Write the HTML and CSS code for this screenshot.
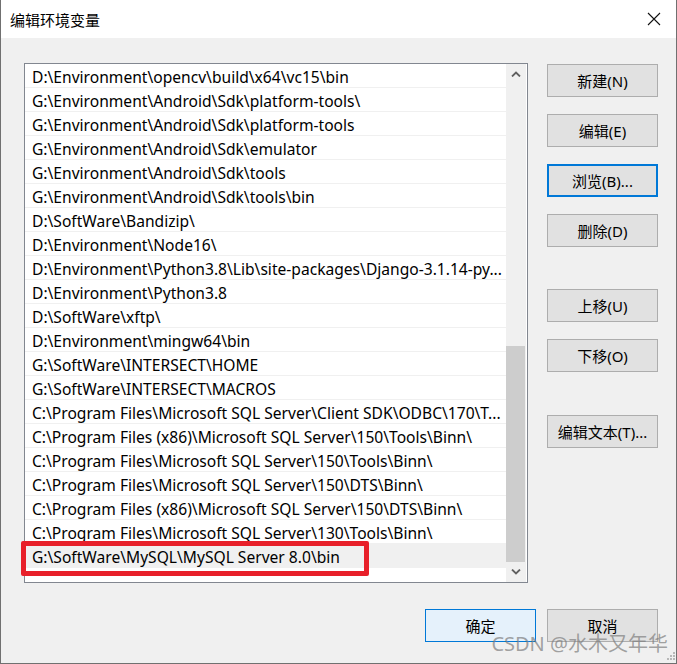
FILE: index.html
```html
<!DOCTYPE html>
<html lang="zh-CN">
<head>
<meta charset="utf-8">
<title>编辑环境变量</title>
<link rel="stylesheet" href="styles.css">
</head>
<body>
<div class="window">
  <div class="titlebar">
    <span class="title">编辑环境变量</span>
    <span class="close">
      <svg width="14" height="14" viewBox="0 0 14 14"><path d="M1 1 L13 13 M13 1 L1 13" stroke="#111" stroke-width="1.1" fill="none"/></svg>
    </span>
  </div>
  <div class="content">
    <div class="main">
      <div class="listbox">
        <div class="rows">
          <div class="row">D:\Environment\opencv\build\x64\vc15\bin</div>
          <div class="row">G:\Environment\Android\Sdk\platform-tools\</div>
          <div class="row">G:\Environment\Android\Sdk\platform-tools</div>
          <div class="row">G:\Environment\Android\Sdk\emulator</div>
          <div class="row">G:\Environment\Android\Sdk\tools</div>
          <div class="row">G:\Environment\Android\Sdk\tools\bin</div>
          <div class="row">D:\SoftWare\Bandizip\</div>
          <div class="row">D:\Environment\Node16\</div>
          <div class="row">D:\Environment\Python3.8\Lib\site-packages\Django-3.1.14-py...</div>
          <div class="row">D:\Environment\Python3.8</div>
          <div class="row">D:\SoftWare\xftp\</div>
          <div class="row">D:\Environment\mingw64\bin</div>
          <div class="row">G:\SoftWare\INTERSECT\HOME</div>
          <div class="row">G:\SoftWare\INTERSECT\MACROS</div>
          <div class="row">C:\Program Files\Microsoft SQL Server\Client SDK\ODBC\170\T...</div>
          <div class="row">C:\Program Files (x86)\Microsoft SQL Server\150\Tools\Binn\</div>
          <div class="row">C:\Program Files\Microsoft SQL Server\150\Tools\Binn\</div>
          <div class="row">C:\Program Files\Microsoft SQL Server\150\DTS\Binn\</div>
          <div class="row">C:\Program Files (x86)\Microsoft SQL Server\150\DTS\Binn\</div>
          <div class="row">C:\Program Files\Microsoft SQL Server\130\Tools\Binn\</div>
          <div class="row selected">G:\SoftWare\MySQL\MySQL Server 8.0\bin</div>
        </div>
        <div class="scrollbar">
          <div class="arrow">
            <svg width="10" height="6" viewBox="0 0 10 6"><path d="M1 5.5 L5 1.5 L9 5.5" stroke="#606060" stroke-width="1.8" fill="none"/></svg>
          </div>
          <div class="track"><div class="thumb"></div></div>
          <div class="arrow">
            <svg width="10" height="6" viewBox="0 0 10 6"><path d="M1 0.5 L5 4.5 L9 0.5" stroke="#606060" stroke-width="1.8" fill="none"/></svg>
          </div>
        </div>
        <span class="mark"></span>
      </div>
      <div class="side">
        <button class="btn">新建(N)</button>
        <button class="btn">编辑(E)</button>
        <button class="btn focus">浏览(B)...</button>
        <button class="btn">删除(D)</button>
        <button class="btn gap">上移(U)</button>
        <button class="btn">下移(O)</button>
        <button class="btn gap2">编辑文本(T)...</button>
      </div>
    </div>
    <div class="footer">
      <button class="btn default">确定</button>
      <button class="btn">取消</button>
    </div>
    <div class="watermark">CSDN @水木又年华</div>
    <svg class="grip" width="10" height="10" viewBox="0 0 10 10">
      <g fill="#b8b8b8">
        <rect x="8" y="0" width="2" height="2"/>
        <rect x="5" y="3" width="2" height="2"/><rect x="8" y="3" width="2" height="2"/>
        <rect x="2" y="6" width="2" height="2"/><rect x="5" y="6" width="2" height="2"/><rect x="8" y="6" width="2" height="2"/>
      </g>
    </svg>
  </div>
</div>
</body>
</html>
```
FILE: styles.css
```css
html, body {
  margin: 0;
  padding: 0;
  background: #3a3a3a;
}
body {
  font-family: "Noto Sans", "Noto Sans CJK SC", sans-serif;
  color: #000;
}
.window {
  width: 677px;
  height: 664px;
  box-sizing: border-box;
  border-left: 1px solid #707070;
  border-right: 1px solid #707070;
  border-bottom: 1px solid #707070;
  display: flex;
  flex-direction: column;
  background: #f0f0f0;
}
.titlebar {
  height: 38px;
  background: #fff;
  display: flex;
  align-items: center;
  justify-content: space-between;
  padding: 0 15px 0 9px;
  flex: none;
}
.title {
  font-family: "Noto Sans CJK SC", sans-serif;
  font-size: 15px;
}
.close {
  display: flex;
  width: 14px;
  height: 14px;
}
.content {
  position: relative;
  flex: 1;
  padding: 25px 18px 0 23px;
}
.main {
  display: flex;
  gap: 19px;
}
.listbox {
  position: relative;
  width: 504px;
  height: 520px;
  box-sizing: border-box;
  border: 1px solid #828790;
  background: #fff;
  display: flex;
}
.rows {
  flex: 1;
  min-width: 0;
  overflow: hidden;
}
.row {
  height: 21px;
  padding-top: 2px;
  border-bottom: 1px solid #f0f0f0;
  padding-left: 7px;
  font-size: 15.6px;
  line-height: 23px;
  white-space: nowrap;
  overflow: hidden;
}
.row.selected {
  background: #f0f0f0;
}
.mark {
  position: absolute;
  left: -4px;
  top: 477px;
  width: 338px;
  height: 25px;
  border: 5px solid #e8202a;
  border-radius: 2px;
}
.scrollbar {
  width: 20px;
  flex: none;
  background: #f0f0f0;
  display: flex;
  flex-direction: column;
  margin-right: 1px;
}
.arrow {
  height: 20px;
  display: flex;
  align-items: center;
  justify-content: center;
  flex: none;
}
.track {
  flex: 1;
  display: flex;
  flex-direction: column;
  justify-content: flex-end;
}
.thumb {
  height: 216px;
  background: #cdcdcd;
  margin-right: 1px;
}
.side {
  display: flex;
  flex-direction: column;
  gap: 17px;
  padding-top: 1px;
}
.btn {
  width: 111px;
  height: 33px;
  box-sizing: border-box;
  border: 1px solid #adadad;
  background: #e1e1e1;
  font-family: "Noto Sans", "Noto Sans CJK SC", sans-serif;
  font-size: 15px;
  line-height: 30px;
  color: #000;
  padding: 0;
  margin: 0;
}
.btn.focus {
  border: 2px solid #0078d7;
}
.btn.gap {
  margin-top: 25px;
}
.btn.gap2 {
  margin-top: 26px;
}
.footer {
  display: flex;
  justify-content: flex-end;
  gap: 11px;
  margin-top: 26px;
}
.btn.default {
  background: #e5f1fb;
  border-color: #0078d7;
}
.watermark {
  position: absolute;
  right: 8px;
  bottom: 6px;
  font-family: "Noto Sans", "Noto Sans CJK SC", sans-serif;
  font-size: 20px;
  color: rgba(125, 125, 125, 0.7);
  white-space: nowrap;
}
.grip {
  position: absolute;
  right: 1px;
  bottom: 1px;
}
```
